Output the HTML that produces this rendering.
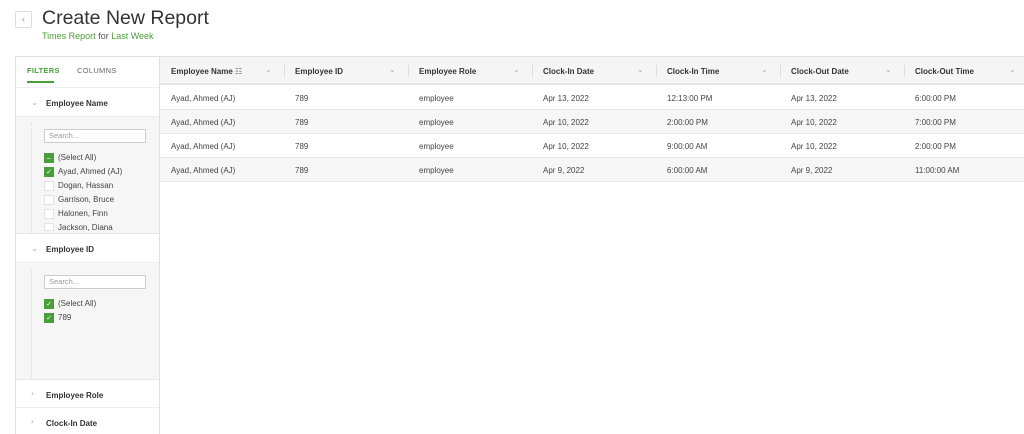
<!DOCTYPE html>
<html style="height:434px;overflow:hidden"><head><style>
*{box-sizing:border-box;margin:0;padding:0}
body{width:1024px;height:434px;overflow:hidden;background:#fff;font-family:"Liberation Sans",sans-serif;color:#333;position:relative}
.a{position:absolute}
.back{left:15px;top:11px;width:17px;height:17px;border:1px solid #ddd;border-radius:2px;font-size:9px;color:#999;text-align:center;line-height:15px}
h1{position:absolute;left:42px;top:7px;font-size:19.5px;font-weight:normal;color:#333;letter-spacing:0}
.sub{left:42px;top:31px;font-size:9px;color:#555}
.sub b{color:#4a9e3a;font-weight:normal}
.panel{left:15px;top:56px;width:1009px;height:378px;border:1px solid #dde0e4;border-bottom:0;border-right:0}
.side{left:15px;top:56px;width:145px;height:378px;border-right:1px solid #dde0e4;border-left:1px solid #dde0e4}
.tab{font-size:7.5px;top:66px;color:#666;letter-spacing:.3px}
.sec{left:16px;width:143px;background:#fff;border-bottom:1px solid #eceef1}
.sec span{position:absolute;left:30px;font-size:8px;font-weight:bold;color:#333}
.chev{position:absolute;left:15px;font-size:8px;color:#aaa}
.content{left:16px;width:143px;background:#f6f6f6;border-bottom:1px solid #e4e6ea}
.dots{position:absolute;left:15px;top:6px;bottom:0;border-left:1px dotted #ddd}
.search{position:absolute;left:28px;width:102px;height:14px;border:1px solid #ccc;background:#fff;font-size:7.5px;color:#999;padding-left:4px;line-height:12px}
.cb{position:absolute;left:28px;width:10px;height:10px;background:#fff;border:1px solid #e3e3e3}
.cb.on{background:#4a9e3a;border-color:#4a9e3a;color:#fff;font-size:7px;line-height:9px;text-align:center}
.lbl{position:absolute;left:42px;font-size:8px;color:#444}
.hdr{left:160px;top:57px;width:864px;height:28px;background:#f5f5f5;border-bottom:2px solid #e2e4e8}
.th{position:absolute;top:10px;font-size:8px;font-weight:bold;color:#333}
.dd{position:absolute;top:8px;font-size:8px;color:#aaa}
.sep{position:absolute;top:8px;width:1px;height:12px;background:#dcdcdc}
.row{left:160px;width:864px;height:24px;border-bottom:1px solid #e6e8ec}
.row.alt{background:#f6f6f6}
.td{position:absolute;top:8px;font-size:8px;color:#444}
</style></head><body>
<div class="a back">‹</div>
<h1>Create New Report</h1>
<div class="a sub"><b>Times Report</b> for <b>Last Week</b></div>
<div class="a panel"></div>
<div class="a side"></div>
<div class="a tab" style="left:27px;color:#4a9e3a;font-weight:bold">FILTERS</div>
<div class="a" style="left:27px;top:81px;width:27px;height:2px;background:#4a9e3a"></div>
<div class="a tab" style="left:77px">COLUMNS</div>
<div class="a" style="left:16px;top:87px;width:143px;height:1px;background:#eceef1"></div>

<div class="a sec" style="top:89px;height:28px"><i class="chev" style="top:9px">⌄</i><span style="top:10px">Employee Name</span></div>
<div class="a content" style="top:117px;height:117px"><div class="dots"></div>
<div class="search" style="top:12px">Search...</div>
<div class="cb on" style="top:36px">–</div><div class="lbl" style="top:36px">(Select All)</div>
<div class="cb on" style="top:50px">✓</div><div class="lbl" style="top:50px">Ayad, Ahmed (AJ)</div>
<div class="cb" style="top:64px"></div><div class="lbl" style="top:64px">Dogan, Hassan</div>
<div class="cb" style="top:78px"></div><div class="lbl" style="top:78px">Garrison, Bruce</div>
<div class="cb" style="top:92px"></div><div class="lbl" style="top:92px">Halonen, Finn</div>
<div class="cb" style="top:106px;height:8px"></div><div class="lbl" style="top:106px">Jackson, Diana</div>
</div>
<div class="a sec" style="top:235px;height:28px"><i class="chev" style="top:9px">⌄</i><span style="top:10px">Employee ID</span></div>
<div class="a content" style="top:263px;height:117px"><div class="dots"></div>
<div class="search" style="top:12px">Search...</div>
<div class="cb on" style="top:36px">✓</div><div class="lbl" style="top:36px">(Select All)</div>
<div class="cb on" style="top:50px">✓</div><div class="lbl" style="top:50px">789</div>
</div>
<div class="a sec" style="top:381px;height:27px"><i class="chev" style="top:8px">›</i><span style="top:10px">Employee Role</span></div>
<div class="a sec" style="top:409px;height:25px;border:0"><i class="chev" style="top:8px">›</i><span style="top:10px">Clock-In Date</span></div>

<div class="a hdr">
<div class="th" style="left:11px">Employee Name <span style="font-weight:normal;color:#666">☷</span></div><div class="dd" style="left:105px">⌄</div><div class="sep" style="left:124px"></div>
<div class="th" style="left:135px">Employee ID</div><div class="dd" style="left:229px">⌄</div><div class="sep" style="left:248px"></div>
<div class="th" style="left:259px">Employee Role</div><div class="dd" style="left:353px">⌄</div><div class="sep" style="left:372px"></div>
<div class="th" style="left:383px">Clock-In Date</div><div class="dd" style="left:477px">⌄</div><div class="sep" style="left:496px"></div>
<div class="th" style="left:507px">Clock-In Time</div><div class="dd" style="left:601px">⌄</div><div class="sep" style="left:620px"></div>
<div class="th" style="left:631px">Clock-Out Date</div><div class="dd" style="left:725px">⌄</div><div class="sep" style="left:744px"></div>
<div class="th" style="left:755px">Clock-Out Time</div><div class="dd" style="left:849px">⌄</div>
</div>

<div class="a row" style="top:86px"><div class="td" style="left:11px">Ayad, Ahmed (AJ)</div><div class="td" style="left:135px">789</div><div class="td" style="left:259px">employee</div><div class="td" style="left:383px">Apr 13, 2022</div><div class="td" style="left:507px">12:13:00 PM</div><div class="td" style="left:631px">Apr 13, 2022</div><div class="td" style="left:755px">6:00:00 PM</div></div>
<div class="a row alt" style="top:110px"><div class="td" style="left:11px">Ayad, Ahmed (AJ)</div><div class="td" style="left:135px">789</div><div class="td" style="left:259px">employee</div><div class="td" style="left:383px">Apr 10, 2022</div><div class="td" style="left:507px">2:00:00 PM</div><div class="td" style="left:631px">Apr 10, 2022</div><div class="td" style="left:755px">7:00:00 PM</div></div>
<div class="a row" style="top:134px"><div class="td" style="left:11px">Ayad, Ahmed (AJ)</div><div class="td" style="left:135px">789</div><div class="td" style="left:259px">employee</div><div class="td" style="left:383px">Apr 10, 2022</div><div class="td" style="left:507px">9:00:00 AM</div><div class="td" style="left:631px">Apr 10, 2022</div><div class="td" style="left:755px">2:00:00 PM</div></div>
<div class="a row alt" style="top:158px"><div class="td" style="left:11px">Ayad, Ahmed (AJ)</div><div class="td" style="left:135px">789</div><div class="td" style="left:259px">employee</div><div class="td" style="left:383px">Apr 9, 2022</div><div class="td" style="left:507px">6:00:00 AM</div><div class="td" style="left:631px">Apr 9, 2022</div><div class="td" style="left:755px">11:00:00 AM</div></div>
</body></html>
